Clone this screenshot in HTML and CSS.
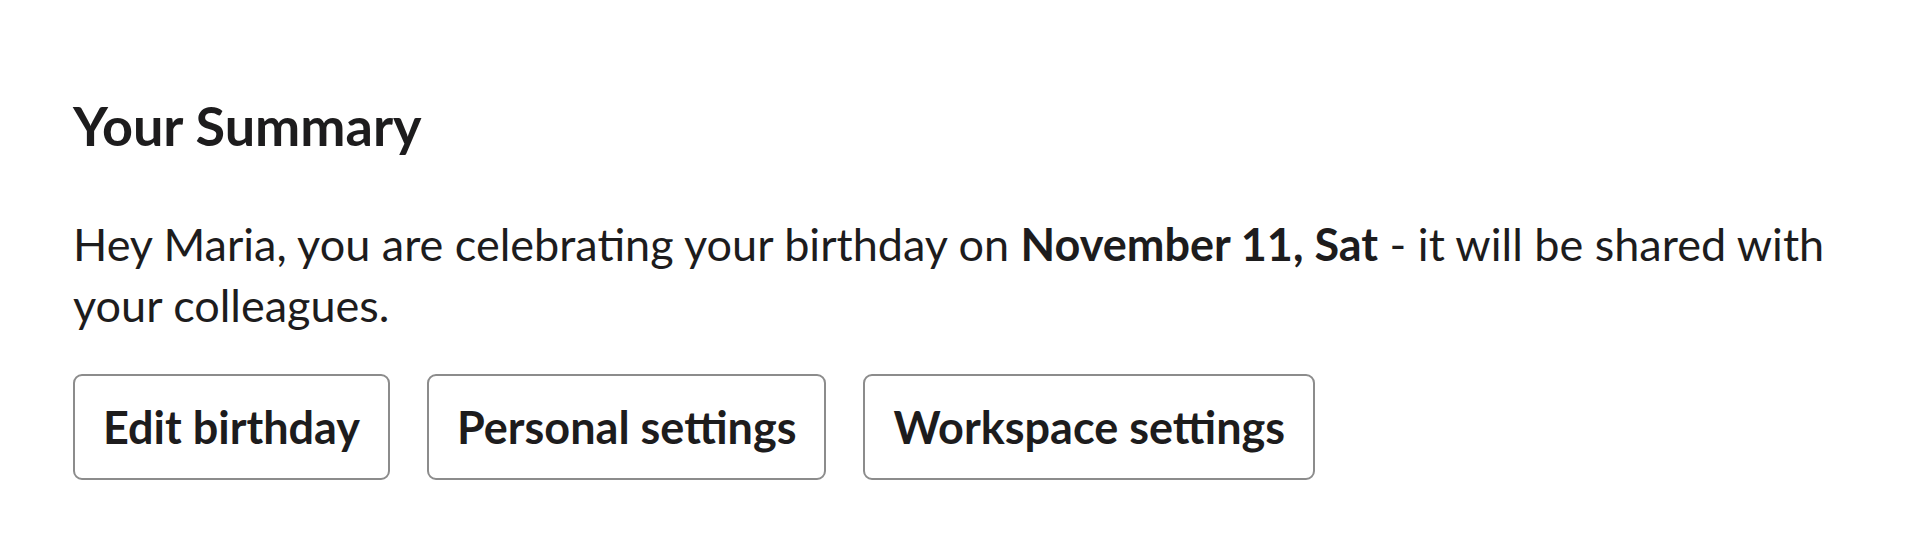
FILE: index.html
```html
<!DOCTYPE html>
<html lang="en">
<head>
<meta charset="utf-8">
<title>Your Summary</title>
<link rel="stylesheet" href="styles.css">
</head>
<body>
<main class="summary">
  <h1 class="summary-title">Your Summary</h1>
  <p class="summary-text">Hey Maria, you are celebrating your birthday on <strong>November 11, Sat</strong> - it will be shared with your colleagues.</p>
  <div class="actions">
    <button class="btn" type="button">Edit birthday</button>
    <button class="btn" type="button">Personal settings</button>
    <button class="btn" type="button">Workspace settings</button>
  </div>
</main>
</body>
</html>
```

FILE: styles.css
```css
html, body {
  margin: 0;
  padding: 0;
  background: #ffffff;
}

body {
  font-family: Lato, "Noto Sans", "Liberation Sans", sans-serif;
  color: #1d1c1d;
}

.summary {
  padding: 94px 60px 0 73px;
}

.summary-title {
  margin: 0;
  font-size: 54px;
  line-height: 1.2;
  font-weight: 700;
}

.summary-text {
  margin: 55px 0 0 0;
  font-size: 45px;
  line-height: 61px;
  font-weight: 400;
}

.summary-text strong {
  font-weight: 700;
}

.actions {
  display: flex;
  gap: 37px;
  margin-top: 38px;
}

.btn {
  font-family: inherit;
  font-size: 45px;
  font-weight: 700;
  line-height: 54px;
  color: #1d1c1d;
  background: #ffffff;
  border: 2px solid #8c8c8c;
  border-radius: 9px;
  padding: 24px 28px;
  cursor: pointer;
}
```
